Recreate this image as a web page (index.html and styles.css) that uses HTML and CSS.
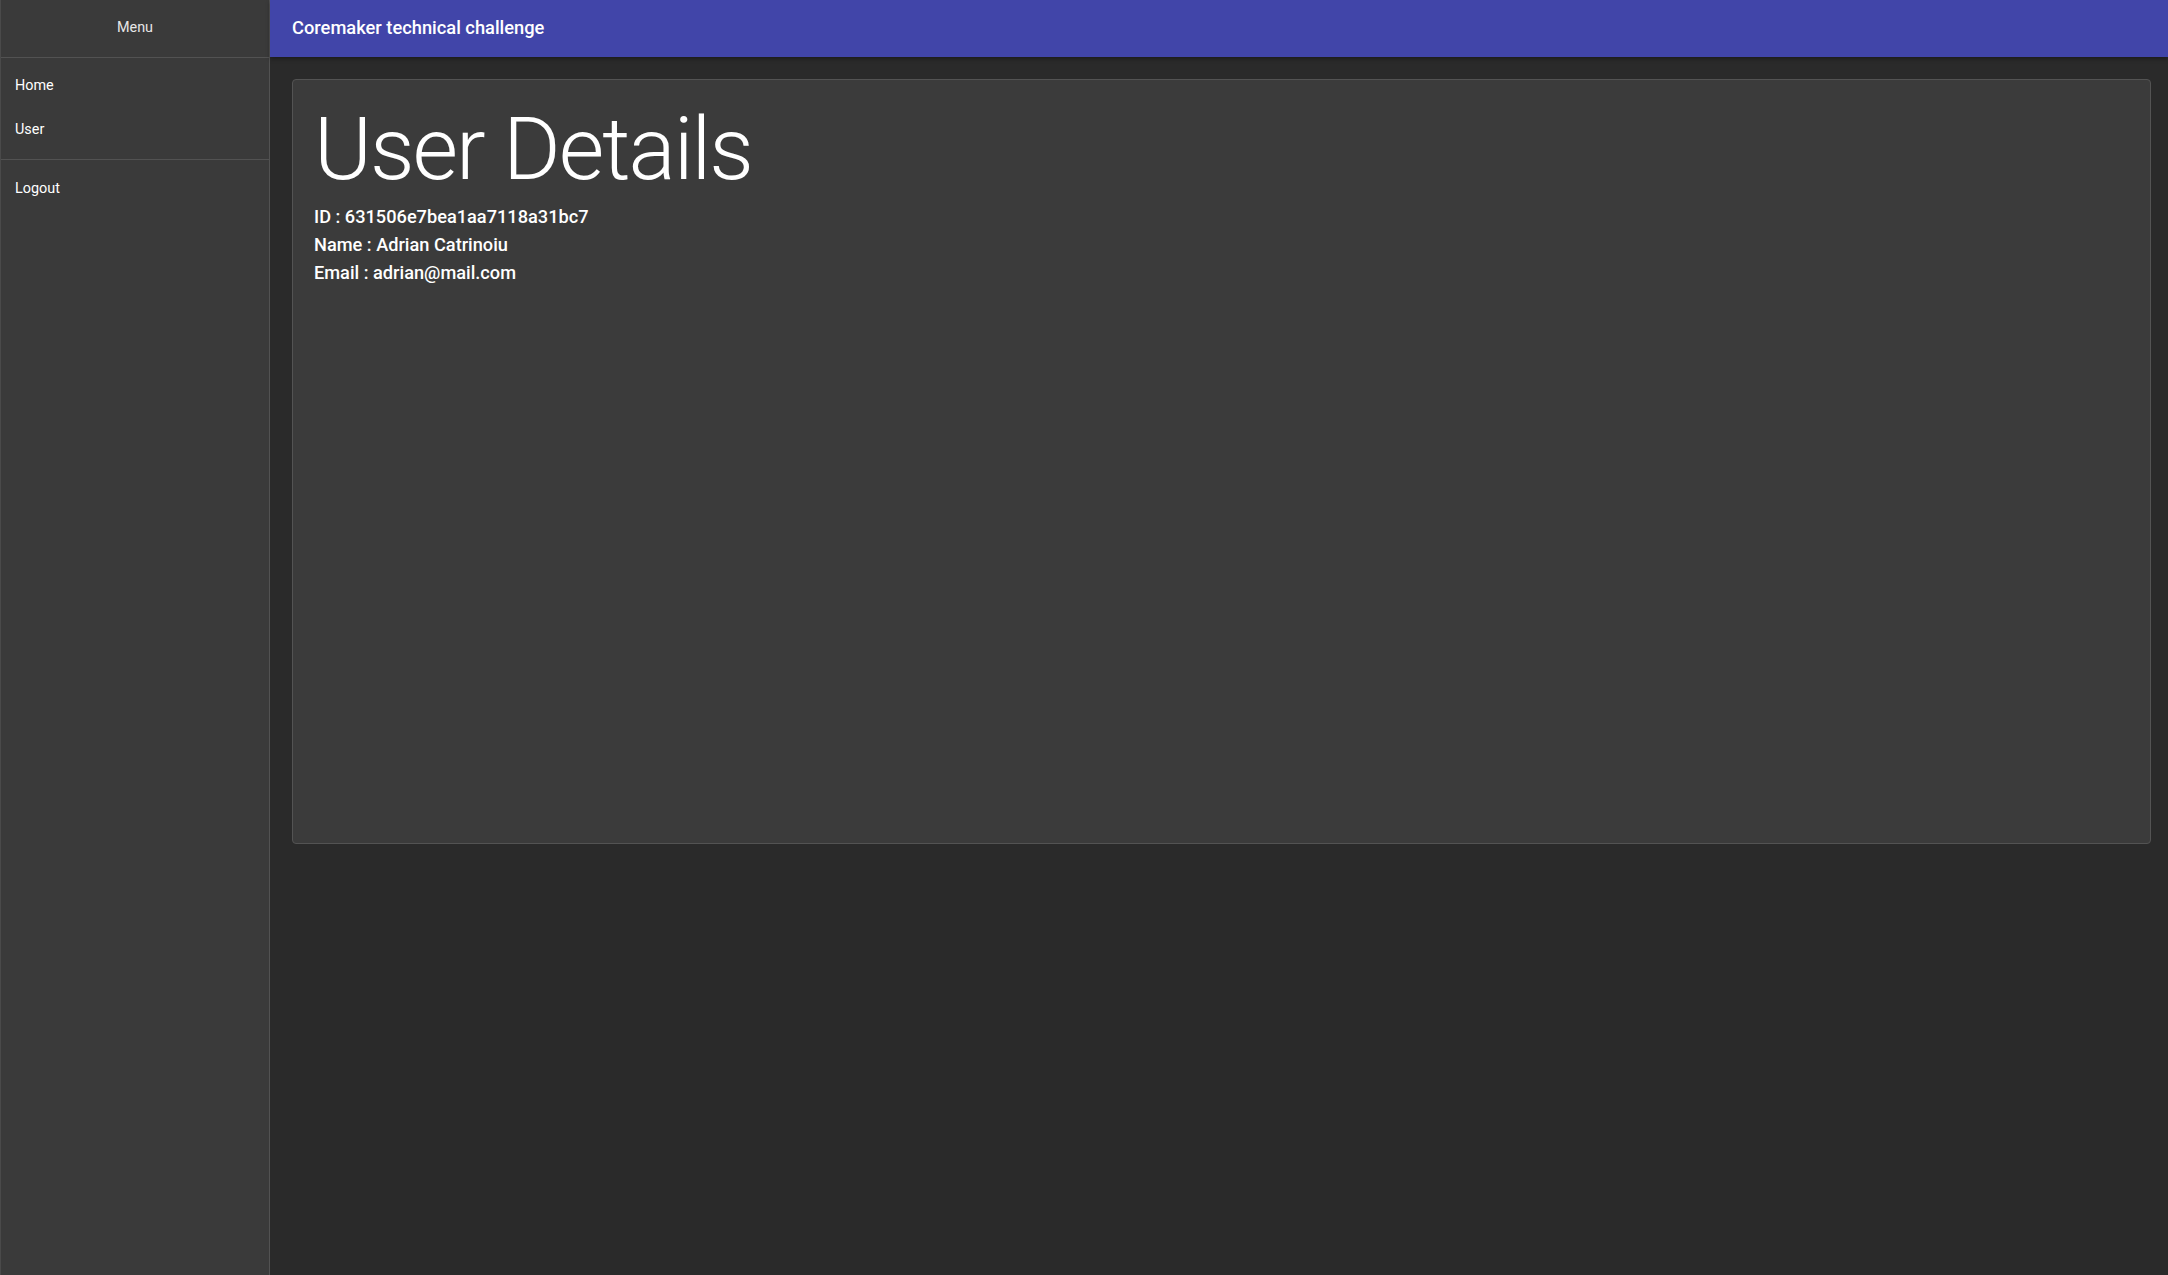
FILE: index.html
```html
<!DOCTYPE html>
<html lang="en">
<head>
    <meta charset="UTF-8">
    <meta name="viewport" content="width=device-width, initial-scale=1.0">
    <title>Coremaker technical challenge</title>
    <link rel="stylesheet" href="styles.css">
</head>
<body>

    <div class="layout">
        <nav class="sidenav">
            <div class="sidenav-title">Menu</div>
            <ul class="nav-list">
                <li><a href="#">Home</a></li>
                <li><a href="#">User</a></li>
            </ul>
            <ul class="nav-list">
                <li><a href="#">Logout</a></li>
            </ul>
        </nav>

        <div class="content">
            <header class="toolbar">Coremaker technical challenge</header>

            <main class="card">
                <h1 class="card-title">User Details</h1>
                <p class="detail">ID : 631506e7bea1aa7118a31bc7</p>
                <p class="detail">Name : Adrian Catrinoiu</p>
                <p class="detail">Email : adrian@mail.com</p>
            </main>
        </div>
    </div>

</body>
</html>
```

FILE: styles.css
```css
* {
    box-sizing: border-box;
}
body {
    margin: 0;
    font-family: 'Roboto', 'Helvetica Neue', sans-serif;
    background-color: #2a2a2a;
    color: #fff;
}
.layout {
    display: flex;
    height: 100vh;
}
.sidenav {
    width: 270px;
    flex-shrink: 0;
    background-color: #3a3a3a;
    border-left: 1px solid #4a4a4a;
    border-right: 1px solid #525252;
}
.sidenav-title {
    height: 58px;
    display: flex;
    align-items: center;
    justify-content: center;
    padding-bottom: 2px;
    font-size: 14.4px;
    color: #e6e6e6;
    border-bottom: 1px solid #525252;
}
.nav-list {
    list-style: none;
    margin: 0;
    padding: 6px 0 7px;
}
.nav-list + .nav-list {
    border-top: 1px solid #525252;
    padding-top: 7px;
}
.nav-list a {
    display: flex;
    align-items: center;
    height: 44px;
    padding-left: 14px;
    padding-bottom: 1px;
    font-size: 14.4px;
    color: #fff;
    text-decoration: none;
}
.content {
    flex: 1;
    display: flex;
    flex-direction: column;
}
.toolbar {
    height: 57px;
    display: flex;
    align-items: center;
    padding-left: 22px;
    padding-bottom: 2px;
    background-color: #4145a9;
    font-size: 18.3px;
    font-weight: 500;
    box-shadow: 0px 2px 4px rgba(0, 0, 0, 0.35);
    position: relative;
}
.card {
    height: 765px;
    margin: 22px 17px 0 22px;
    padding: 25px 21px;
    background-color: #3b3b3b;
    border: 1px solid #535353;
    border-radius: 4px;
}
.card-title {
    margin: 0 0 10px 0;
    font-size: 88px;
    font-weight: 300;
    letter-spacing: -2px;
    line-height: 1;
}
.detail {
    margin: 0;
    font-size: 18.2px;
    font-weight: 500;
    line-height: 28px;
}
```
